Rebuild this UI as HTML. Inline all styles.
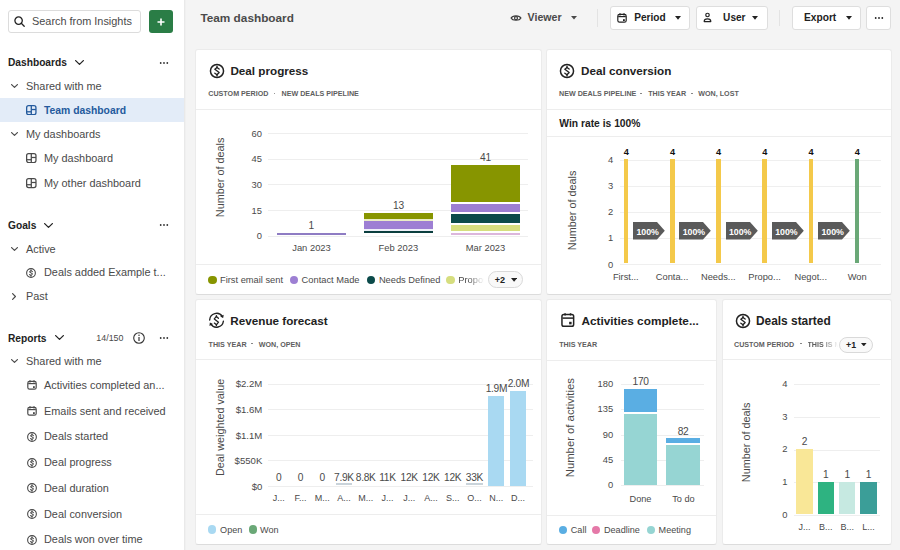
<!DOCTYPE html><html><head><meta charset="utf-8"><style>
html,body{margin:0;padding:0;} body{width:900px;height:550px;overflow:hidden;position:relative;background:#f4f4f4;font-family:"Liberation Sans", sans-serif;}
.t{position:absolute;white-space:nowrap;}
.card{position:absolute;background:#fff;border:1px solid #ebebeb;border-bottom-color:#dcdcdc;border-radius:3px;box-sizing:border-box;}
</style></head><body>
<div style="position:absolute;left:0.00px;top:0.00px;width:184.00px;height:550.00px;background:#ffffff;"></div>
<div style="position:absolute;left:184.00px;top:0.00px;width:1.00px;height:550.00px;background:#e9e9e9;"></div>
<div style="position:absolute;left:185.00px;top:0.00px;width:1.00px;height:550.00px;background:#f0f0f0;"></div>
<div style="position:absolute;left:8px;top:10px;width:133px;height:23px;box-sizing:border-box;border:1px solid #dcdcdc;border-radius:3px;background:#fff"></div>
<svg style="position:absolute;left:14.00px;top:16.00px" width="11" height="11" viewBox="0 0 11 11" fill="none"><circle cx="4.6" cy="4.6" r="3.7" stroke="#222" stroke-width="1.3"/><path d="M7.3 7.3 L10.2 10.2" stroke="#222" stroke-width="1.3" stroke-linecap="round"/></svg>
<div class="t" style="left:32.00px;top:16.00px;font-size:10.9px;line-height:10.9px;color:#4a4a4a;">Search from Insights</div>
<div style="position:absolute;left:149px;top:10px;width:24px;height:23px;border-radius:3px;background:#2a7d46"></div>
<svg style="position:absolute;left:157.00px;top:17.50px" width="8" height="8" viewBox="0 0 8 8" fill="none"><path d="M4 0.5 V7.5 M0.5 4 H7.5" stroke="#fff" stroke-width="1.6"/></svg>
<div class="t" style="left:8.00px;top:58.00px;font-size:10.2px;line-height:10.2px;font-weight:bold;color:#222;">Dashboards</div>
<svg style="position:absolute;left:75.30px;top:60.30px" width="9" height="5" viewBox="0 0 9 5" fill="none"><path d="M0.65 0.65 L4.5 4.35 L8.35 0.65" stroke="#222" stroke-width="1.3" stroke-linecap="round" stroke-linejoin="round"/></svg>
<svg style="position:absolute;left:159.00px;top:61.00px" width="10" height="4" viewBox="0 0 10 4" fill="none"><circle cx="1.7000000000000002" cy="2" r="0.9" fill="#333"/><circle cx="5.0" cy="2" r="0.9" fill="#333"/><circle cx="8.3" cy="2" r="0.9" fill="#333"/></svg>
<svg style="position:absolute;left:10.50px;top:84.00px" width="7" height="4" viewBox="0 0 7 4" fill="none"><path d="M0.6 0.6 L3.5 3.4 L6.4 0.6" stroke="#4a4a4a" stroke-width="1.2" stroke-linecap="round" stroke-linejoin="round"/></svg>
<div class="t" style="left:26.00px;top:81.00px;font-size:10.9px;line-height:10.9px;color:#4a4a4a;">Shared with me</div>
<div style="position:absolute;left:0.00px;top:98.00px;width:184.00px;height:24.00px;background:#e3ecf8;"></div>
<svg style="position:absolute;left:26.30px;top:105.00px" width="10.6" height="10.3" viewBox="0 0 10.6 10.3" fill="none"><rect x="0.65" y="0.65" width="9.299999999999999" height="9.0" rx="2" stroke="#245a9d" stroke-width="1.3"/><path d="M5.3 0.65 V9.65" stroke="#245a9d" stroke-width="1.3"/><path d="M0.65 6.798000000000001 H5.3" stroke="#245a9d" stroke-width="1.3"/><path d="M5.3 4.532 H9.95" stroke="#245a9d" stroke-width="1.3"/></svg>
<div class="t" style="left:44.00px;top:106.00px;font-size:10.35px;line-height:10.35px;font-weight:bold;color:#245a9d;">Team dashboard</div>
<svg style="position:absolute;left:10.50px;top:132.00px" width="7" height="4" viewBox="0 0 7 4" fill="none"><path d="M0.6 0.6 L3.5 3.4 L6.4 0.6" stroke="#4a4a4a" stroke-width="1.2" stroke-linecap="round" stroke-linejoin="round"/></svg>
<div class="t" style="left:26.00px;top:129.00px;font-size:10.9px;line-height:10.9px;color:#4a4a4a;">My dashboards</div>
<svg style="position:absolute;left:26.30px;top:152.80px" width="10.6" height="10.2" viewBox="0 0 10.6 10.2" fill="none"><rect x="0.625" y="0.625" width="9.35" height="8.95" rx="2" stroke="#4a4a4a" stroke-width="1.25"/><path d="M5.3 0.625 V9.575" stroke="#4a4a4a" stroke-width="1.25"/><path d="M0.625 6.732 H5.3" stroke="#4a4a4a" stroke-width="1.25"/><path d="M5.3 4.4879999999999995 H9.975" stroke="#4a4a4a" stroke-width="1.25"/></svg>
<div class="t" style="left:44.00px;top:153.00px;font-size:10.9px;line-height:10.9px;color:#4a4a4a;">My dashboard</div>
<svg style="position:absolute;left:26.30px;top:178.40px" width="10.6" height="10.2" viewBox="0 0 10.6 10.2" fill="none"><rect x="0.625" y="0.625" width="9.35" height="8.95" rx="2" stroke="#4a4a4a" stroke-width="1.25"/><path d="M5.3 0.625 V9.575" stroke="#4a4a4a" stroke-width="1.25"/><path d="M0.625 6.732 H5.3" stroke="#4a4a4a" stroke-width="1.25"/><path d="M5.3 4.4879999999999995 H9.975" stroke="#4a4a4a" stroke-width="1.25"/></svg>
<div class="t" style="left:44.00px;top:178.00px;font-size:10.9px;line-height:10.9px;color:#4a4a4a;">My other dashboard</div>
<div class="t" style="left:8.00px;top:221.00px;font-size:10.2px;line-height:10.2px;font-weight:bold;color:#222;">Goals</div>
<svg style="position:absolute;left:43.70px;top:223.00px" width="9" height="5" viewBox="0 0 9 5" fill="none"><path d="M0.65 0.65 L4.5 4.35 L8.35 0.65" stroke="#222" stroke-width="1.3" stroke-linecap="round" stroke-linejoin="round"/></svg>
<svg style="position:absolute;left:159.00px;top:223.00px" width="10" height="4" viewBox="0 0 10 4" fill="none"><circle cx="1.7000000000000002" cy="2" r="0.9" fill="#333"/><circle cx="5.0" cy="2" r="0.9" fill="#333"/><circle cx="8.3" cy="2" r="0.9" fill="#333"/></svg>
<svg style="position:absolute;left:10.50px;top:247.00px" width="7" height="4" viewBox="0 0 7 4" fill="none"><path d="M0.6 0.6 L3.5 3.4 L6.4 0.6" stroke="#4a4a4a" stroke-width="1.2" stroke-linecap="round" stroke-linejoin="round"/></svg>
<div class="t" style="left:26.00px;top:244.00px;font-size:10.9px;line-height:10.9px;color:#4a4a4a;">Active</div>
<svg style="position:absolute;left:21.40px;top:262.60px" width="20" height="20" viewBox="0 0 20 20" fill="none"><circle cx="10.0" cy="10.0" r="4.37" stroke="#4a4a4a" stroke-width="1.1"/><path d="M11.43 8.67 L10.00 7.63 L8.57 8.83 L11.43 10.97 L10.00 12.50 L8.57 11.47" stroke="#4a4a4a" stroke-width="1.01" stroke-linecap="round" stroke-linejoin="round"/><path d="M10.00 7.63 L10.00 6.80 M10.00 12.50 L10.00 13.33" stroke="#4a4a4a" stroke-width="1.01" stroke-linecap="round"/></svg>
<div class="t" style="left:44.00px;top:267.00px;font-size:10.9px;line-height:10.9px;color:#4a4a4a;">Deals added Example t...</div>
<svg style="position:absolute;left:11.60px;top:293.00px" width="4" height="7" viewBox="0 0 4 7" fill="none"><path d="M0.6 0.6 L3.4 3.5 L0.6 6.4" stroke="#4a4a4a" stroke-width="1.2" stroke-linecap="round" stroke-linejoin="round"/></svg>
<div class="t" style="left:26.00px;top:291.00px;font-size:10.9px;line-height:10.9px;color:#4a4a4a;">Past</div>
<div class="t" style="left:8.00px;top:334.00px;font-size:10.2px;line-height:10.2px;font-weight:bold;color:#222;">Reports</div>
<svg style="position:absolute;left:54.70px;top:335.30px" width="9" height="5" viewBox="0 0 9 5" fill="none"><path d="M0.65 0.65 L4.5 4.35 L8.35 0.65" stroke="#222" stroke-width="1.3" stroke-linecap="round" stroke-linejoin="round"/></svg>
<div class="t" style="left:96.30px;top:334.00px;font-size:8.9px;line-height:8.9px;color:#4a4a4a;">14/150</div>
<svg style="position:absolute;left:132.50px;top:331.80px" width="12" height="12" viewBox="0 0 12 12" fill="none"><circle cx="6" cy="6" r="5.3" stroke="#333" stroke-width="1.1"/><path d="M6 5 V9" stroke="#333" stroke-width="1.2"/><circle cx="6" cy="3.3" r="0.75" fill="#333"/></svg>
<svg style="position:absolute;left:159.00px;top:336.00px" width="10" height="4" viewBox="0 0 10 4" fill="none"><circle cx="1.7000000000000002" cy="2" r="0.9" fill="#333"/><circle cx="5.0" cy="2" r="0.9" fill="#333"/><circle cx="8.3" cy="2" r="0.9" fill="#333"/></svg>
<svg style="position:absolute;left:10.50px;top:359.00px" width="7" height="4" viewBox="0 0 7 4" fill="none"><path d="M0.6 0.6 L3.5 3.4 L6.4 0.6" stroke="#4a4a4a" stroke-width="1.2" stroke-linecap="round" stroke-linejoin="round"/></svg>
<div class="t" style="left:26.00px;top:356.00px;font-size:10.9px;line-height:10.9px;color:#4a4a4a;">Shared with me</div>
<svg style="position:absolute;left:27.00px;top:380.20px" width="10" height="10" viewBox="0 0 10 10" fill="none"><rect x="0.8" y="1.4" width="8.4" height="7.8" rx="1.8" stroke="#4a4a4a" stroke-width="1.2"/><path d="M1.2 3.5999999999999996 H8.8" stroke="#4a4a4a" stroke-width="1.2"/><path d="M3.0 0.3 V2.4 M7.0 0.3 V2.4" stroke="#4a4a4a" stroke-width="1.2"/><rect x="6.0" y="6.2" width="1.7999999999999998" height="1.7999999999999998" fill="#4a4a4a"/></svg>
<div class="t" style="left:44.00px;top:380.00px;font-size:10.9px;line-height:10.9px;color:#4a4a4a;">Activities completed an...</div>
<svg style="position:absolute;left:27.00px;top:405.95px" width="10" height="10" viewBox="0 0 10 10" fill="none"><rect x="0.8" y="1.4" width="8.4" height="7.8" rx="1.8" stroke="#4a4a4a" stroke-width="1.2"/><path d="M1.2 3.5999999999999996 H8.8" stroke="#4a4a4a" stroke-width="1.2"/><path d="M3.0 0.3 V2.4 M7.0 0.3 V2.4" stroke="#4a4a4a" stroke-width="1.2"/><rect x="6.0" y="6.2" width="1.7999999999999998" height="1.7999999999999998" fill="#4a4a4a"/></svg>
<div class="t" style="left:44.00px;top:406.00px;font-size:10.9px;line-height:10.9px;color:#4a4a4a;">Emails sent and received</div>
<svg style="position:absolute;left:21.60px;top:426.80px" width="20" height="20" viewBox="0 0 20 20" fill="none"><circle cx="10.0" cy="10.0" r="4.37" stroke="#4a4a4a" stroke-width="1.1"/><path d="M11.43 8.67 L10.00 7.63 L8.57 8.83 L11.43 10.97 L10.00 12.50 L8.57 11.47" stroke="#4a4a4a" stroke-width="1.01" stroke-linecap="round" stroke-linejoin="round"/><path d="M10.00 7.63 L10.00 6.80 M10.00 12.50 L10.00 13.33" stroke="#4a4a4a" stroke-width="1.01" stroke-linecap="round"/></svg>
<div class="t" style="left:44.00px;top:431.00px;font-size:10.9px;line-height:10.9px;color:#4a4a4a;">Deals started</div>
<svg style="position:absolute;left:21.60px;top:452.55px" width="20" height="20" viewBox="0 0 20 20" fill="none"><circle cx="10.0" cy="10.0" r="4.37" stroke="#4a4a4a" stroke-width="1.1"/><path d="M11.43 8.67 L10.00 7.63 L8.57 8.83 L11.43 10.97 L10.00 12.50 L8.57 11.47" stroke="#4a4a4a" stroke-width="1.01" stroke-linecap="round" stroke-linejoin="round"/><path d="M10.00 7.63 L10.00 6.80 M10.00 12.50 L10.00 13.33" stroke="#4a4a4a" stroke-width="1.01" stroke-linecap="round"/></svg>
<div class="t" style="left:44.00px;top:457.00px;font-size:10.9px;line-height:10.9px;color:#4a4a4a;">Deal progress</div>
<svg style="position:absolute;left:21.60px;top:478.30px" width="20" height="20" viewBox="0 0 20 20" fill="none"><circle cx="10.0" cy="10.0" r="4.37" stroke="#4a4a4a" stroke-width="1.1"/><path d="M11.43 8.67 L10.00 7.63 L8.57 8.83 L11.43 10.97 L10.00 12.50 L8.57 11.47" stroke="#4a4a4a" stroke-width="1.01" stroke-linecap="round" stroke-linejoin="round"/><path d="M10.00 7.63 L10.00 6.80 M10.00 12.50 L10.00 13.33" stroke="#4a4a4a" stroke-width="1.01" stroke-linecap="round"/></svg>
<div class="t" style="left:44.00px;top:483.00px;font-size:10.9px;line-height:10.9px;color:#4a4a4a;">Deal duration</div>
<svg style="position:absolute;left:21.60px;top:504.05px" width="20" height="20" viewBox="0 0 20 20" fill="none"><circle cx="10.0" cy="10.0" r="4.37" stroke="#4a4a4a" stroke-width="1.1"/><path d="M11.43 8.67 L10.00 7.63 L8.57 8.83 L11.43 10.97 L10.00 12.50 L8.57 11.47" stroke="#4a4a4a" stroke-width="1.01" stroke-linecap="round" stroke-linejoin="round"/><path d="M10.00 7.63 L10.00 6.80 M10.00 12.50 L10.00 13.33" stroke="#4a4a4a" stroke-width="1.01" stroke-linecap="round"/></svg>
<div class="t" style="left:44.00px;top:509.00px;font-size:10.9px;line-height:10.9px;color:#4a4a4a;">Deal conversion</div>
<svg style="position:absolute;left:21.60px;top:529.80px" width="20" height="20" viewBox="0 0 20 20" fill="none"><circle cx="10.0" cy="10.0" r="4.37" stroke="#4a4a4a" stroke-width="1.1"/><path d="M11.43 8.67 L10.00 7.63 L8.57 8.83 L11.43 10.97 L10.00 12.50 L8.57 11.47" stroke="#4a4a4a" stroke-width="1.01" stroke-linecap="round" stroke-linejoin="round"/><path d="M10.00 7.63 L10.00 6.80 M10.00 12.50 L10.00 13.33" stroke="#4a4a4a" stroke-width="1.01" stroke-linecap="round"/></svg>
<div class="t" style="left:44.00px;top:534.00px;font-size:10.9px;line-height:10.9px;color:#4a4a4a;">Deals won over time</div>
<div class="t" style="left:200.40px;top:13.00px;font-size:11.8px;line-height:11.8px;font-weight:bold;color:#4a4a4a;">Team dashboard</div>
<svg style="position:absolute;left:509.50px;top:13.50px" width="12" height="8" viewBox="0 0 12 8" fill="none"><path d="M1.1 4 C2.6 1.1 9.4 1.1 10.9 4 C9.4 6.9 2.6 6.9 1.1 4 Z" stroke="#3a3a3a" stroke-width="1.25" stroke-linejoin="round"/><circle cx="6" cy="4.1" r="1.5" stroke="#3a3a3a" stroke-width="1.1"/></svg>
<div class="t" style="left:527.60px;top:12.00px;font-size:10.6px;line-height:10.6px;font-weight:bold;color:#4a4a4a;">Viewer</div>
<svg style="position:absolute;left:570.70px;top:16.40px" width="6" height="3.6" viewBox="0 0 6 3.6" fill="none"><path d="M0 0 H6 L3.0 3.6 Z" fill="#4a4a4a"/></svg>
<div style="position:absolute;left:597.00px;top:9.00px;width:1.00px;height:17.50px;background:#e3e3e3;"></div>
<div style="position:absolute;left:610px;top:6px;width:80px;height:23.5px;box-sizing:border-box;border:1px solid #dedede;border-radius:3px;background:#fff"></div>
<svg style="position:absolute;left:617.00px;top:12.80px" width="10" height="10" viewBox="0 0 10 10" fill="none"><rect x="0.8" y="1.4" width="8.4" height="7.8" rx="1.8" stroke="#222" stroke-width="1.2"/><path d="M1.2 3.5999999999999996 H8.8" stroke="#222" stroke-width="1.2"/><path d="M3.0 0.3 V2.4 M7.0 0.3 V2.4" stroke="#222" stroke-width="1.2"/><rect x="6.0" y="6.2" width="1.7999999999999998" height="1.7999999999999998" fill="#222"/></svg>
<div class="t" style="left:634.20px;top:13.00px;font-size:10.1px;line-height:10.1px;font-weight:bold;color:#222;">Period</div>
<svg style="position:absolute;left:674.80px;top:16.20px" width="6" height="3.8" viewBox="0 0 6 3.8" fill="none"><path d="M0 0 H6 L3.0 3.8 Z" fill="#222"/></svg>
<div style="position:absolute;left:696px;top:6px;width:71.5px;height:23.5px;box-sizing:border-box;border:1px solid #dedede;border-radius:3px;background:#fff"></div>
<svg style="position:absolute;left:703.30px;top:12.00px" width="9" height="10.5" viewBox="0 0 9 10.5" fill="none"><circle cx="4.5" cy="3" r="1.75" stroke="#222" stroke-width="1.2"/><path d="M1.2 9.6 C1.2 6 7.8 6 7.8 9.6 Z" stroke="#222" stroke-width="1.2" stroke-linejoin="round"/></svg>
<div class="t" style="left:723.10px;top:13.00px;font-size:10.1px;line-height:10.1px;font-weight:bold;color:#222;">User</div>
<svg style="position:absolute;left:752.00px;top:16.20px" width="6" height="3.8" viewBox="0 0 6 3.8" fill="none"><path d="M0 0 H6 L3.0 3.8 Z" fill="#222"/></svg>
<div style="position:absolute;left:779.00px;top:10.00px;width:1.00px;height:16.00px;background:#e3e3e3;"></div>
<div style="position:absolute;left:791.7px;top:6px;width:69px;height:23.5px;box-sizing:border-box;border:1px solid #dedede;border-radius:3px;background:#fff"></div>
<div class="t" style="left:804.00px;top:13.00px;font-size:10.2px;line-height:10.2px;font-weight:bold;color:#222;">Export</div>
<svg style="position:absolute;left:845.80px;top:15.90px" width="6" height="3.8" viewBox="0 0 6 3.8" fill="none"><path d="M0 0 H6 L3.0 3.8 Z" fill="#222"/></svg>
<div style="position:absolute;left:866.4px;top:6px;width:24.2px;height:23.5px;box-sizing:border-box;border:1px solid #dedede;border-radius:3px;background:#fff"></div>
<svg style="position:absolute;left:873.60px;top:15.60px" width="10" height="4" viewBox="0 0 10 4" fill="none"><circle cx="1.7000000000000002" cy="2" r="0.9" fill="#222"/><circle cx="5.0" cy="2" r="0.9" fill="#222"/><circle cx="8.3" cy="2" r="0.9" fill="#222"/></svg>
<div class="card" style="left:195px;top:49px;width:347px;height:246px"></div>
<svg style="position:absolute;left:206.50px;top:60.80px" width="20" height="20" viewBox="0 0 20 20" fill="none"><circle cx="10.0" cy="10.0" r="6.55" stroke="#222" stroke-width="1.5"/><path d="M12.15 8.00 L10.00 6.45 L7.85 8.25 L12.15 11.45 L10.00 13.75 L7.85 12.20" stroke="#222" stroke-width="1.38" stroke-linecap="round" stroke-linejoin="round"/><path d="M10.00 6.45 L10.00 5.20 M10.00 13.75 L10.00 15.00" stroke="#222" stroke-width="1.38" stroke-linecap="round"/></svg>
<div class="t" style="left:230.40px;top:65.00px;font-size:11.7px;line-height:11.7px;font-weight:bold;color:#222;">Deal progress</div>
<div class="t" style="left:208.30px;top:91.00px;font-size:7.15px;line-height:7.15px;font-weight:bold;color:#5e5e5e;">CUSTOM PERIOD</div>
<div style="position:absolute;left:273.70px;top:92.60px;width:1.80px;height:1.50px;background:#777;border-radius:0.7px"></div>
<div class="t" style="left:281.50px;top:91.00px;font-size:7.15px;line-height:7.15px;font-weight:bold;color:#5e5e5e;">NEW DEALS PIPELINE</div>
<div style="position:absolute;left:196.00px;top:108.50px;width:345.00px;height:1.00px;background:#ededed;"></div>
<div style="position:absolute;left:268.00px;top:133.20px;width:260.00px;height:1.00px;background:#eeeeee;"></div>
<div class="t" style="left:-38.00px;width:300px;text-align:right;top:129.00px;font-size:9.4px;line-height:9.4px;color:#4a4a4a;">60</div>
<div style="position:absolute;left:268.00px;top:158.82px;width:260.00px;height:1.00px;background:#eeeeee;"></div>
<div class="t" style="left:-38.00px;width:300px;text-align:right;top:154.00px;font-size:9.4px;line-height:9.4px;color:#4a4a4a;">45</div>
<div style="position:absolute;left:268.00px;top:184.44px;width:260.00px;height:1.00px;background:#eeeeee;"></div>
<div class="t" style="left:-38.00px;width:300px;text-align:right;top:180.00px;font-size:9.4px;line-height:9.4px;color:#4a4a4a;">30</div>
<div style="position:absolute;left:268.00px;top:210.06px;width:260.00px;height:1.00px;background:#eeeeee;"></div>
<div class="t" style="left:-38.00px;width:300px;text-align:right;top:206.00px;font-size:9.4px;line-height:9.4px;color:#4a4a4a;">15</div>
<div style="position:absolute;left:268.00px;top:235.68px;width:260.00px;height:1.00px;background:#eeeeee;"></div>
<div class="t" style="left:-38.00px;width:300px;text-align:right;top:231.00px;font-size:9.4px;line-height:9.4px;color:#4a4a4a;">0</div>
<div class="t" style="left:70.34px;top:172.17px;width:300px;text-align:center;font-size:10.85px;line-height:10.85px;color:#4a4a4a;transform:rotate(-90deg);">Number of deals</div>
<div style="position:absolute;left:277.00px;top:233.30px;width:68.70px;height:1.80px;background:#8e7cc3;"></div>
<div class="t" style="left:161.20px;width:300px;text-align:center;top:221.00px;font-size:10.2px;line-height:10.2px;color:#4a4a4a;letter-spacing:-0.3px;">1</div>
<div style="position:absolute;left:364.00px;top:213.00px;width:68.80px;height:6.00px;background:#879500;"></div>
<div style="position:absolute;left:364.00px;top:219.00px;width:68.80px;height:1.80px;background:#e9edc6;"></div>
<div style="position:absolute;left:364.00px;top:220.80px;width:68.80px;height:8.20px;background:#9d7fd3;"></div>
<div style="position:absolute;left:364.00px;top:229.00px;width:68.80px;height:2.00px;background:#eef0f8;"></div>
<div style="position:absolute;left:364.00px;top:231.00px;width:68.80px;height:2.20px;background:#0b3f3f;"></div>
<div class="t" style="left:248.40px;width:300px;text-align:center;top:201.00px;font-size:10.2px;line-height:10.2px;color:#4a4a4a;letter-spacing:-0.3px;">13</div>
<div style="position:absolute;left:450.90px;top:165.20px;width:69.00px;height:36.90px;background:#879500;"></div>
<div style="position:absolute;left:450.90px;top:204.30px;width:69.00px;height:7.90px;background:#9d7fd3;"></div>
<div style="position:absolute;left:450.90px;top:214.10px;width:69.00px;height:8.70px;background:#0b4a4a;"></div>
<div style="position:absolute;left:450.90px;top:224.70px;width:69.00px;height:6.30px;background:#d6de7f;"></div>
<div style="position:absolute;left:450.90px;top:232.60px;width:69.00px;height:2.20px;background:#dcb6dc;"></div>
<div class="t" style="left:335.40px;width:300px;text-align:center;top:153.00px;font-size:10.2px;line-height:10.2px;color:#4a4a4a;letter-spacing:-0.3px;">41</div>
<div class="t" style="left:161.50px;width:300px;text-align:center;top:243.00px;font-size:9.4px;line-height:9.4px;color:#4a4a4a;">Jan 2023</div>
<div class="t" style="left:248.40px;width:300px;text-align:center;top:243.00px;font-size:9.4px;line-height:9.4px;color:#4a4a4a;">Feb 2023</div>
<div class="t" style="left:335.50px;width:300px;text-align:center;top:243.00px;font-size:9.4px;line-height:9.4px;color:#4a4a4a;">Mar 2023</div>
<div style="position:absolute;left:196.00px;top:263.50px;width:345.00px;height:1.00px;background:#ededed;"></div>
<div style="position:absolute;left:208.00px;top:275.70px;width:8.6px;height:8.6px;border-radius:50%;background:#879500"></div>
<div class="t" style="left:220.00px;top:276.00px;font-size:9.3px;line-height:9.3px;color:#4a4a4a;">First email sent</div>
<div style="position:absolute;left:289.50px;top:275.70px;width:8.6px;height:8.6px;border-radius:50%;background:#9d7fd3"></div>
<div class="t" style="left:301.60px;top:276.00px;font-size:9.3px;line-height:9.3px;color:#4a4a4a;">Contact Made</div>
<div style="position:absolute;left:366.50px;top:275.70px;width:8.6px;height:8.6px;border-radius:50%;background:#0b4a4a"></div>
<div class="t" style="left:378.90px;top:276.00px;font-size:9.3px;line-height:9.3px;color:#4a4a4a;">Needs Defined</div>
<div style="position:absolute;left:446.20px;top:275.70px;width:8.6px;height:8.6px;border-radius:50%;background:#d6de7f"></div>
<div class="t" style="left:458.30px;top:276.00px;font-size:9.3px;line-height:9.3px;color:#4a4a4a;width:26px;overflow:hidden;-webkit-mask-image:linear-gradient(90deg,#000 40%,transparent);">Proposal</div>
<div style="position:absolute;left:488px;top:271.3px;width:35.3px;height:17px;box-sizing:border-box;border:1px solid #d9d9d9;border-radius:9px;background:#f9f9f9"></div>
<div class="t" style="left:494.70px;top:276.00px;font-size:9.1px;line-height:9.1px;font-weight:bold;color:#222;">+2</div>
<svg style="position:absolute;left:511.10px;top:278.05px" width="6.2" height="3.7" viewBox="0 0 6.2 3.7" fill="none"><path d="M0 0 H6.2 L3.1 3.7 Z" fill="#222"/></svg>
<div class="card" style="left:546px;top:49px;width:346px;height:246px"></div>
<svg style="position:absolute;left:557.40px;top:60.80px" width="20" height="20" viewBox="0 0 20 20" fill="none"><circle cx="10.0" cy="10.0" r="6.55" stroke="#222" stroke-width="1.5"/><path d="M12.15 8.00 L10.00 6.45 L7.85 8.25 L12.15 11.45 L10.00 13.75 L7.85 12.20" stroke="#222" stroke-width="1.38" stroke-linecap="round" stroke-linejoin="round"/><path d="M10.00 6.45 L10.00 5.20 M10.00 13.75 L10.00 15.00" stroke="#222" stroke-width="1.38" stroke-linecap="round"/></svg>
<div class="t" style="left:581.10px;top:65.00px;font-size:11.7px;line-height:11.7px;font-weight:bold;color:#222;">Deal conversion</div>
<div class="t" style="left:559.00px;top:91.00px;font-size:7.15px;line-height:7.15px;font-weight:bold;color:#5e5e5e;">NEW DEALS PIPELINE</div>
<div style="position:absolute;left:640.40px;top:92.60px;width:1.80px;height:1.50px;background:#777;border-radius:0.7px"></div>
<div class="t" style="left:648.20px;top:91.00px;font-size:7.15px;line-height:7.15px;font-weight:bold;color:#5e5e5e;">THIS YEAR</div>
<div style="position:absolute;left:690.90px;top:92.60px;width:1.80px;height:1.50px;background:#777;border-radius:0.7px"></div>
<div class="t" style="left:698.30px;top:91.00px;font-size:7.15px;line-height:7.15px;font-weight:bold;color:#5e5e5e;">WON, LOST</div>
<div style="position:absolute;left:547.00px;top:108.50px;width:344.00px;height:1.00px;background:#ededed;"></div>
<div class="t" style="left:559.30px;top:119.00px;font-size:10.3px;line-height:10.3px;font-weight:bold;color:#222;">Win rate is 100%</div>
<div style="position:absolute;left:547.00px;top:136.20px;width:344.00px;height:1.00px;background:#ededed;"></div>
<div style="position:absolute;left:619.50px;top:159.50px;width:261.00px;height:1.00px;background:#efefef;"></div>
<div class="t" style="left:313.20px;width:300px;text-align:right;top:155.00px;font-size:9.4px;line-height:9.4px;color:#4a4a4a;">4</div>
<div style="position:absolute;left:619.50px;top:185.60px;width:261.00px;height:1.00px;background:#efefef;"></div>
<div class="t" style="left:313.20px;width:300px;text-align:right;top:181.00px;font-size:9.4px;line-height:9.4px;color:#4a4a4a;">3</div>
<div style="position:absolute;left:619.50px;top:211.70px;width:261.00px;height:1.00px;background:#efefef;"></div>
<div class="t" style="left:313.20px;width:300px;text-align:right;top:207.00px;font-size:9.4px;line-height:9.4px;color:#4a4a4a;">2</div>
<div style="position:absolute;left:619.50px;top:237.80px;width:261.00px;height:1.00px;background:#efefef;"></div>
<div class="t" style="left:313.20px;width:300px;text-align:right;top:233.00px;font-size:9.4px;line-height:9.4px;color:#4a4a4a;">1</div>
<div style="position:absolute;left:619.50px;top:263.90px;width:261.00px;height:1.00px;background:#efefef;"></div>
<div class="t" style="left:313.20px;width:300px;text-align:right;top:260.00px;font-size:9.4px;line-height:9.4px;color:#4a4a4a;">0</div>
<div class="t" style="left:421.64px;top:205.38px;width:300px;text-align:center;font-size:10.85px;line-height:10.85px;color:#4a4a4a;transform:rotate(-90deg);">Number of deals</div>
<div style="position:absolute;left:623.70px;top:158.80px;width:4.60px;height:104.30px;background:#f4c94a;"></div>
<div class="t" style="left:476.20px;width:300px;text-align:center;top:148.00px;font-size:9.2px;line-height:9.2px;font-weight:bold;color:#111;">4</div>
<div class="t" style="left:475.80px;width:300px;text-align:center;top:273.00px;font-size:9.3px;line-height:9.3px;color:#4a4a4a;">First...</div>
<svg style="position:absolute;left:633.10px;top:222.40px" width="32" height="17.4" viewBox="0 0 32 17.4" fill="none"><path d="M0 0 H24 L31.8 8.7 L24 17.4 H0 Z" fill="#5a5a5a"/></svg>
<div class="t" style="left:497.70px;width:300px;text-align:center;top:228.00px;font-size:8.8px;line-height:8.8px;font-weight:bold;color:#fff;">100%</div>
<div style="position:absolute;left:669.94px;top:158.80px;width:4.60px;height:104.30px;background:#f4c94a;"></div>
<div class="t" style="left:522.44px;width:300px;text-align:center;top:148.00px;font-size:9.2px;line-height:9.2px;font-weight:bold;color:#111;">4</div>
<div class="t" style="left:522.04px;width:300px;text-align:center;top:273.00px;font-size:9.3px;line-height:9.3px;color:#4a4a4a;">Conta...</div>
<svg style="position:absolute;left:679.34px;top:222.40px" width="32" height="17.4" viewBox="0 0 32 17.4" fill="none"><path d="M0 0 H24 L31.8 8.7 L24 17.4 H0 Z" fill="#5a5a5a"/></svg>
<div class="t" style="left:543.94px;width:300px;text-align:center;top:228.00px;font-size:8.8px;line-height:8.8px;font-weight:bold;color:#fff;">100%</div>
<div style="position:absolute;left:716.18px;top:158.80px;width:4.60px;height:104.30px;background:#f4c94a;"></div>
<div class="t" style="left:568.68px;width:300px;text-align:center;top:148.00px;font-size:9.2px;line-height:9.2px;font-weight:bold;color:#111;">4</div>
<div class="t" style="left:568.28px;width:300px;text-align:center;top:273.00px;font-size:9.3px;line-height:9.3px;color:#4a4a4a;">Needs...</div>
<svg style="position:absolute;left:725.58px;top:222.40px" width="32" height="17.4" viewBox="0 0 32 17.4" fill="none"><path d="M0 0 H24 L31.8 8.7 L24 17.4 H0 Z" fill="#5a5a5a"/></svg>
<div class="t" style="left:590.18px;width:300px;text-align:center;top:228.00px;font-size:8.8px;line-height:8.8px;font-weight:bold;color:#fff;">100%</div>
<div style="position:absolute;left:762.42px;top:158.80px;width:4.60px;height:104.30px;background:#f4c94a;"></div>
<div class="t" style="left:614.92px;width:300px;text-align:center;top:148.00px;font-size:9.2px;line-height:9.2px;font-weight:bold;color:#111;">4</div>
<div class="t" style="left:614.52px;width:300px;text-align:center;top:273.00px;font-size:9.3px;line-height:9.3px;color:#4a4a4a;">Propo...</div>
<svg style="position:absolute;left:771.82px;top:222.40px" width="32" height="17.4" viewBox="0 0 32 17.4" fill="none"><path d="M0 0 H24 L31.8 8.7 L24 17.4 H0 Z" fill="#5a5a5a"/></svg>
<div class="t" style="left:636.42px;width:300px;text-align:center;top:228.00px;font-size:8.8px;line-height:8.8px;font-weight:bold;color:#fff;">100%</div>
<div style="position:absolute;left:808.66px;top:158.80px;width:4.60px;height:104.30px;background:#f4c94a;"></div>
<div class="t" style="left:661.16px;width:300px;text-align:center;top:148.00px;font-size:9.2px;line-height:9.2px;font-weight:bold;color:#111;">4</div>
<div class="t" style="left:660.76px;width:300px;text-align:center;top:273.00px;font-size:9.3px;line-height:9.3px;color:#4a4a4a;">Negot...</div>
<svg style="position:absolute;left:818.06px;top:222.40px" width="32" height="17.4" viewBox="0 0 32 17.4" fill="none"><path d="M0 0 H24 L31.8 8.7 L24 17.4 H0 Z" fill="#5a5a5a"/></svg>
<div class="t" style="left:682.66px;width:300px;text-align:center;top:228.00px;font-size:8.8px;line-height:8.8px;font-weight:bold;color:#fff;">100%</div>
<div style="position:absolute;left:854.90px;top:158.80px;width:4.60px;height:104.30px;background:#6aa877;"></div>
<div class="t" style="left:707.40px;width:300px;text-align:center;top:148.00px;font-size:9.2px;line-height:9.2px;font-weight:bold;color:#111;">4</div>
<div class="t" style="left:707.20px;width:300px;text-align:center;top:273.00px;font-size:9.3px;line-height:9.3px;color:#4a4a4a;">Won</div>
<div class="card" style="left:195px;top:299px;width:347px;height:246px"></div>
<svg style="position:absolute;left:204.00px;top:309.00px" width="25" height="23" viewBox="0 0 25 23" fill="none"><path d="M5.66 10.94 A6.9 6.9 0 0 1 18.40 7.64" stroke="#222" stroke-width="1.4" stroke-linecap="round"/><path d="M19.21 9.12 L19.66 5.71 L16.13 7.59 Z" fill="#222"/><path d="M19.38 12.26 A6.9 6.9 0 0 1 6.70 14.96" stroke="#222" stroke-width="1.4" stroke-linecap="round"/><path d="M5.89 13.48 L5.44 16.89 L8.97 15.01 Z" fill="#222"/><path d="M14.4 9.3 L12.4 7.4 L10.3 9.9 L14.5 13.2 L12.4 15.8 L10.4 14.1" stroke="#222" stroke-width="1.3" stroke-linecap="round" stroke-linejoin="round"/><path d="M12.4 7.4 V6.6 M12.4 15.8 V16.6" stroke="#222" stroke-width="1.3" stroke-linecap="round"/></svg>
<div class="t" style="left:230.30px;top:315.00px;font-size:11.7px;line-height:11.7px;font-weight:bold;color:#222;">Revenue forecast</div>
<div class="t" style="left:208.60px;top:342.00px;font-size:7.15px;line-height:7.15px;font-weight:bold;color:#5e5e5e;">THIS YEAR</div>
<div style="position:absolute;left:251.40px;top:342.80px;width:1.80px;height:1.50px;background:#777;border-radius:0.7px"></div>
<div class="t" style="left:258.80px;top:342.00px;font-size:7.15px;line-height:7.15px;font-weight:bold;color:#5e5e5e;">WON, OPEN</div>
<div style="position:absolute;left:196.00px;top:358.60px;width:345.00px;height:1.00px;background:#ededed;"></div>
<div style="position:absolute;left:267.70px;top:383.60px;width:265.30px;height:1.00px;background:#eeeeee;"></div>
<div class="t" style="left:-37.70px;width:300px;text-align:right;top:379.00px;font-size:9.6px;line-height:9.6px;color:#4a4a4a;">$2.2M</div>
<div style="position:absolute;left:267.70px;top:409.18px;width:265.30px;height:1.00px;background:#eeeeee;"></div>
<div class="t" style="left:-37.70px;width:300px;text-align:right;top:405.00px;font-size:9.6px;line-height:9.6px;color:#4a4a4a;">$1.6M</div>
<div style="position:absolute;left:267.70px;top:434.76px;width:265.30px;height:1.00px;background:#eeeeee;"></div>
<div class="t" style="left:-37.70px;width:300px;text-align:right;top:431.00px;font-size:9.6px;line-height:9.6px;color:#4a4a4a;">$1.1M</div>
<div style="position:absolute;left:267.70px;top:460.34px;width:265.30px;height:1.00px;background:#eeeeee;"></div>
<div class="t" style="left:-37.70px;width:300px;text-align:right;top:456.00px;font-size:9.6px;line-height:9.6px;color:#4a4a4a;">$550K</div>
<div style="position:absolute;left:267.70px;top:485.92px;width:265.30px;height:1.00px;background:#eeeeee;"></div>
<div class="t" style="left:-37.70px;width:300px;text-align:right;top:482.00px;font-size:9.6px;line-height:9.6px;color:#4a4a4a;">$0</div>
<div class="t" style="left:70.36px;top:422.40px;width:300px;text-align:center;font-size:10.8px;line-height:10.8px;color:#4a4a4a;transform:rotate(-90deg);">Deal weighted value</div>
<div class="t" style="left:128.70px;width:300px;text-align:center;top:494.00px;font-size:9.0px;line-height:9.0px;color:#4a4a4a;">J...</div>
<div class="t" style="left:150.45px;width:300px;text-align:center;top:494.00px;font-size:9.0px;line-height:9.0px;color:#4a4a4a;">F...</div>
<div class="t" style="left:172.20px;width:300px;text-align:center;top:494.00px;font-size:9.0px;line-height:9.0px;color:#4a4a4a;">M...</div>
<div class="t" style="left:193.95px;width:300px;text-align:center;top:494.00px;font-size:9.0px;line-height:9.0px;color:#4a4a4a;">A...</div>
<div style="position:absolute;left:335.75px;top:483.40px;width:16.40px;height:1.60px;background:#c9d3da;"></div>
<div class="t" style="left:215.70px;width:300px;text-align:center;top:494.00px;font-size:9.0px;line-height:9.0px;color:#4a4a4a;">M...</div>
<div class="t" style="left:237.45px;width:300px;text-align:center;top:494.00px;font-size:9.0px;line-height:9.0px;color:#4a4a4a;">J...</div>
<div class="t" style="left:259.20px;width:300px;text-align:center;top:494.00px;font-size:9.0px;line-height:9.0px;color:#4a4a4a;">J...</div>
<div class="t" style="left:280.95px;width:300px;text-align:center;top:494.00px;font-size:9.0px;line-height:9.0px;color:#4a4a4a;">A...</div>
<div class="t" style="left:302.70px;width:300px;text-align:center;top:494.00px;font-size:9.0px;line-height:9.0px;color:#4a4a4a;">S...</div>
<div class="t" style="left:324.45px;width:300px;text-align:center;top:494.00px;font-size:9.0px;line-height:9.0px;color:#4a4a4a;">O...</div>
<div style="position:absolute;left:466.25px;top:483.40px;width:16.40px;height:1.60px;background:#c9d3da;"></div>
<div class="t" style="left:346.20px;width:300px;text-align:center;top:494.00px;font-size:9.0px;line-height:9.0px;color:#4a4a4a;">N...</div>
<div class="t" style="left:367.95px;width:300px;text-align:center;top:494.00px;font-size:9.0px;line-height:9.0px;color:#4a4a4a;">D...</div>
<div class="t" style="left:128.70px;width:300px;text-align:center;top:473.00px;font-size:10.2px;line-height:10.2px;color:#4a4a4a;letter-spacing:-0.3px;">0</div>
<div class="t" style="left:150.45px;width:300px;text-align:center;top:473.00px;font-size:10.2px;line-height:10.2px;color:#4a4a4a;letter-spacing:-0.3px;">0</div>
<div class="t" style="left:172.20px;width:300px;text-align:center;top:473.00px;font-size:10.2px;line-height:10.2px;color:#4a4a4a;letter-spacing:-0.3px;">0</div>
<div class="t" style="left:193.95px;width:300px;text-align:center;top:473.00px;font-size:10.2px;line-height:10.2px;color:#4a4a4a;letter-spacing:-0.3px;">7.9K</div>
<div class="t" style="left:215.70px;width:300px;text-align:center;top:473.00px;font-size:10.2px;line-height:10.2px;color:#4a4a4a;letter-spacing:-0.3px;">8.8K</div>
<div class="t" style="left:237.45px;width:300px;text-align:center;top:473.00px;font-size:10.2px;line-height:10.2px;color:#4a4a4a;letter-spacing:-0.3px;">11K</div>
<div class="t" style="left:259.20px;width:300px;text-align:center;top:473.00px;font-size:10.2px;line-height:10.2px;color:#4a4a4a;letter-spacing:-0.3px;">12K</div>
<div class="t" style="left:280.95px;width:300px;text-align:center;top:473.00px;font-size:10.2px;line-height:10.2px;color:#4a4a4a;letter-spacing:-0.3px;">12K</div>
<div class="t" style="left:302.70px;width:300px;text-align:center;top:473.00px;font-size:10.2px;line-height:10.2px;color:#4a4a4a;letter-spacing:-0.3px;">12K</div>
<div class="t" style="left:324.45px;width:300px;text-align:center;top:473.00px;font-size:10.2px;line-height:10.2px;color:#4a4a4a;letter-spacing:-0.3px;">33K</div>
<div style="position:absolute;left:488.20px;top:396.20px;width:16.20px;height:89.50px;background:#a9d9f2;"></div>
<div style="position:absolute;left:509.50px;top:391.10px;width:16.70px;height:94.60px;background:#a9d9f2;"></div>
<div class="t" style="left:346.40px;width:300px;text-align:center;top:384.00px;font-size:10.2px;line-height:10.2px;color:#4a4a4a;letter-spacing:-0.3px;">1.9M</div>
<div class="t" style="left:368.40px;width:300px;text-align:center;top:379.00px;font-size:10.2px;line-height:10.2px;color:#4a4a4a;letter-spacing:-0.3px;">2.0M</div>
<div style="position:absolute;left:196.00px;top:514.00px;width:345.00px;height:1.00px;background:#ededed;"></div>
<div style="position:absolute;left:208.10px;top:525.40px;width:8.4px;height:8.4px;border-radius:50%;background:#a9d9f2"></div>
<div class="t" style="left:220.10px;top:526.00px;font-size:9.1px;line-height:9.1px;color:#4a4a4a;">Open</div>
<div style="position:absolute;left:248.50px;top:525.40px;width:8.4px;height:8.4px;border-radius:50%;background:#6aa877"></div>
<div class="t" style="left:260.10px;top:526.00px;font-size:9.1px;line-height:9.1px;color:#4a4a4a;">Won</div>
<div class="card" style="left:546px;top:299px;width:171px;height:246px"></div>
<svg style="position:absolute;left:561.00px;top:313.30px" width="13.6" height="14.2" viewBox="0 0 13.6 14.2" fill="none"><rect x="0.95" y="1.4" width="11.7" height="11.85" rx="1.8" stroke="#222" stroke-width="1.5"/><path d="M1.5 5.111999999999999 H12.1" stroke="#222" stroke-width="1.5"/><path d="M4.08 0.3 V2.4 M9.52 0.3 V2.4" stroke="#222" stroke-width="1.5"/><rect x="8.16" y="8.804" width="2.448" height="2.5559999999999996" fill="#222"/></svg>
<div class="t" style="left:581.40px;top:316.00px;font-size:11.8px;line-height:11.8px;font-weight:bold;color:#222;">Activities complete...</div>
<div class="t" style="left:559.20px;top:342.00px;font-size:7.15px;line-height:7.15px;font-weight:bold;color:#5e5e5e;">THIS YEAR</div>
<div style="position:absolute;left:547.00px;top:359.50px;width:169.00px;height:1.00px;background:#ededed;"></div>
<div style="position:absolute;left:620.50px;top:384.10px;width:83.50px;height:1.00px;background:#eeeeee;"></div>
<div class="t" style="left:313.20px;width:300px;text-align:right;top:379.00px;font-size:9.4px;line-height:9.4px;color:#4a4a4a;">180</div>
<div style="position:absolute;left:620.50px;top:409.40px;width:83.50px;height:1.00px;background:#eeeeee;"></div>
<div class="t" style="left:313.20px;width:300px;text-align:right;top:404.00px;font-size:9.4px;line-height:9.4px;color:#4a4a4a;">135</div>
<div style="position:absolute;left:620.50px;top:434.70px;width:83.50px;height:1.00px;background:#eeeeee;"></div>
<div class="t" style="left:313.20px;width:300px;text-align:right;top:430.00px;font-size:9.4px;line-height:9.4px;color:#4a4a4a;">90</div>
<div style="position:absolute;left:620.50px;top:460.00px;width:83.50px;height:1.00px;background:#eeeeee;"></div>
<div class="t" style="left:313.20px;width:300px;text-align:right;top:455.00px;font-size:9.4px;line-height:9.4px;color:#4a4a4a;">45</div>
<div style="position:absolute;left:620.50px;top:485.30px;width:83.50px;height:1.00px;background:#eeeeee;"></div>
<div class="t" style="left:313.20px;width:300px;text-align:right;top:480.00px;font-size:9.4px;line-height:9.4px;color:#4a4a4a;">0</div>
<div class="t" style="left:421.48px;top:422.35px;width:300px;text-align:center;font-size:11.3px;line-height:11.3px;color:#4a4a4a;transform:rotate(-90deg);">Number of activities</div>
<div style="position:absolute;left:623.80px;top:388.60px;width:33.50px;height:23.60px;background:#5aaee3;"></div>
<div style="position:absolute;left:623.80px;top:414.00px;width:33.50px;height:70.50px;background:#96d5d3;"></div>
<div style="position:absolute;left:666.30px;top:438.40px;width:33.80px;height:4.40px;background:#5aaee3;"></div>
<div style="position:absolute;left:666.30px;top:445.00px;width:33.80px;height:39.50px;background:#96d5d3;"></div>
<div class="t" style="left:490.60px;width:300px;text-align:center;top:377.00px;font-size:10.2px;line-height:10.2px;color:#4a4a4a;letter-spacing:-0.3px;">170</div>
<div class="t" style="left:533.00px;width:300px;text-align:center;top:427.00px;font-size:10.2px;line-height:10.2px;color:#4a4a4a;letter-spacing:-0.3px;">82</div>
<div class="t" style="left:490.50px;width:300px;text-align:center;top:495.00px;font-size:9.2px;line-height:9.2px;color:#4a4a4a;">Done</div>
<div class="t" style="left:533.50px;width:300px;text-align:center;top:495.00px;font-size:9.2px;line-height:9.2px;color:#4a4a4a;">To do</div>
<div style="position:absolute;left:547.00px;top:514.50px;width:169.00px;height:1.00px;background:#ededed;"></div>
<div style="position:absolute;left:559.00px;top:525.80px;width:8.4px;height:8.4px;border-radius:50%;background:#5aaee3"></div>
<div class="t" style="left:570.80px;top:526.00px;font-size:9.1px;line-height:9.1px;color:#4a4a4a;">Call</div>
<div style="position:absolute;left:592.10px;top:525.80px;width:8.4px;height:8.4px;border-radius:50%;background:#e579a8"></div>
<div class="t" style="left:604.00px;top:526.00px;font-size:9.1px;line-height:9.1px;color:#4a4a4a;">Deadline</div>
<div style="position:absolute;left:646.80px;top:525.80px;width:8.4px;height:8.4px;border-radius:50%;background:#96d5d3"></div>
<div class="t" style="left:658.60px;top:526.00px;font-size:9.1px;line-height:9.1px;color:#4a4a4a;">Meeting</div>
<div class="card" style="left:722px;top:299px;width:170px;height:246px"></div>
<svg style="position:absolute;left:732.70px;top:311.00px" width="20" height="20" viewBox="0 0 20 20" fill="none"><circle cx="10.0" cy="10.0" r="6.55" stroke="#222" stroke-width="1.5"/><path d="M12.15 8.00 L10.00 6.45 L7.85 8.25 L12.15 11.45 L10.00 13.75 L7.85 12.20" stroke="#222" stroke-width="1.38" stroke-linecap="round" stroke-linejoin="round"/><path d="M10.00 6.45 L10.00 5.20 M10.00 13.75 L10.00 15.00" stroke="#222" stroke-width="1.38" stroke-linecap="round"/></svg>
<div class="t" style="left:756.00px;top:316.00px;font-size:11.9px;line-height:11.9px;font-weight:bold;color:#222;">Deals started</div>
<div class="t" style="left:734.00px;top:342.00px;font-size:7.15px;line-height:7.15px;font-weight:bold;color:#5e5e5e;">CUSTOM PERIOD</div>
<div style="position:absolute;left:799.80px;top:342.80px;width:1.80px;height:1.50px;background:#777;border-radius:0.7px"></div>
<div class="t" style="left:807.50px;top:342.00px;font-size:7.15px;line-height:7.15px;font-weight:bold;color:#5e5e5e;width:30px;overflow:hidden;-webkit-mask-image:linear-gradient(90deg,#000 45%,transparent);">THIS IS MONTH</div>
<div style="position:absolute;left:839px;top:336.6px;width:33.7px;height:16px;box-sizing:border-box;border:1px solid #d9d9d9;border-radius:8px;background:#f9f9f9"></div>
<div class="t" style="left:846.00px;top:341.00px;font-size:8.8px;line-height:8.8px;font-weight:bold;color:#222;">+1</div>
<svg style="position:absolute;left:861.20px;top:342.90px" width="5.6" height="3.4" viewBox="0 0 5.6 3.4" fill="none"><path d="M0 0 H5.6 L2.8 3.4 Z" fill="#222"/></svg>
<div style="position:absolute;left:723.00px;top:358.80px;width:168.00px;height:1.00px;background:#ededed;"></div>
<div style="position:absolute;left:794.00px;top:383.90px;width:86.00px;height:1.00px;background:#eeeeee;"></div>
<div class="t" style="left:487.40px;width:300px;text-align:right;top:379.00px;font-size:9.4px;line-height:9.4px;color:#4a4a4a;">4</div>
<div style="position:absolute;left:794.00px;top:416.70px;width:86.00px;height:1.00px;background:#eeeeee;"></div>
<div class="t" style="left:487.40px;width:300px;text-align:right;top:412.00px;font-size:9.4px;line-height:9.4px;color:#4a4a4a;">3</div>
<div style="position:absolute;left:794.00px;top:449.50px;width:86.00px;height:1.00px;background:#eeeeee;"></div>
<div class="t" style="left:487.40px;width:300px;text-align:right;top:444.00px;font-size:9.4px;line-height:9.4px;color:#4a4a4a;">2</div>
<div style="position:absolute;left:794.00px;top:482.30px;width:86.00px;height:1.00px;background:#eeeeee;"></div>
<div class="t" style="left:487.40px;width:300px;text-align:right;top:477.00px;font-size:9.4px;line-height:9.4px;color:#4a4a4a;">1</div>
<div style="position:absolute;left:794.00px;top:515.10px;width:86.00px;height:1.00px;background:#eeeeee;"></div>
<div class="t" style="left:487.40px;width:300px;text-align:right;top:510.00px;font-size:9.4px;line-height:9.4px;color:#4a4a4a;">0</div>
<div class="t" style="left:596.04px;top:437.27px;width:300px;text-align:center;font-size:10.85px;line-height:10.85px;color:#4a4a4a;transform:rotate(-90deg);">Number of deals</div>
<div style="position:absolute;left:795.90px;top:448.90px;width:17.00px;height:65.00px;background:#f9e797;"></div>
<div class="t" style="left:654.40px;width:300px;text-align:center;top:437.00px;font-size:10.2px;line-height:10.2px;color:#4a4a4a;letter-spacing:-0.3px;">2</div>
<div class="t" style="left:654.40px;width:300px;text-align:center;top:523.00px;font-size:9.0px;line-height:9.0px;color:#4a4a4a;">J...</div>
<div style="position:absolute;left:817.50px;top:482.00px;width:16.30px;height:31.90px;background:#2eb381;"></div>
<div class="t" style="left:675.65px;width:300px;text-align:center;top:470.00px;font-size:10.2px;line-height:10.2px;color:#4a4a4a;letter-spacing:-0.3px;">1</div>
<div class="t" style="left:675.65px;width:300px;text-align:center;top:523.00px;font-size:9.0px;line-height:9.0px;color:#4a4a4a;">B...</div>
<div style="position:absolute;left:839.10px;top:482.00px;width:16.30px;height:31.90px;background:#c6e9e1;"></div>
<div class="t" style="left:697.25px;width:300px;text-align:center;top:470.00px;font-size:10.2px;line-height:10.2px;color:#4a4a4a;letter-spacing:-0.3px;">1</div>
<div class="t" style="left:697.25px;width:300px;text-align:center;top:523.00px;font-size:9.0px;line-height:9.0px;color:#4a4a4a;">B...</div>
<div style="position:absolute;left:860.00px;top:482.00px;width:16.90px;height:31.90px;background:#3b9e98;"></div>
<div class="t" style="left:718.45px;width:300px;text-align:center;top:470.00px;font-size:10.2px;line-height:10.2px;color:#4a4a4a;letter-spacing:-0.3px;">1</div>
<div class="t" style="left:718.45px;width:300px;text-align:center;top:523.00px;font-size:9.0px;line-height:9.0px;color:#4a4a4a;">L...</div>
</body></html>
